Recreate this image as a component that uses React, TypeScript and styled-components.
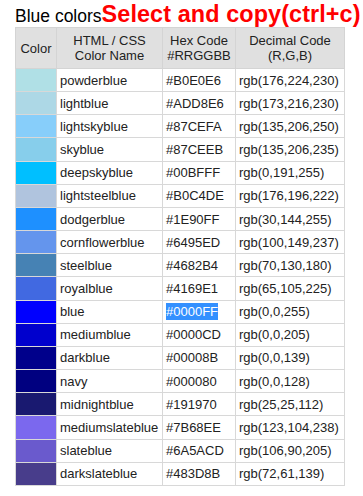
import styled, { createGlobalStyle } from "styled-components";

const GlobalStyle = createGlobalStyle`
  body {
    margin: 0;
    background: #fff;
    font-family: "Liberation Sans", Arial, sans-serif;
  }
`;

const colors: [string, string, string][] = [
  ["powderblue", "#B0E0E6", "rgb(176,224,230)"],
  ["lightblue", "#ADD8E6", "rgb(173,216,230)"],
  ["lightskyblue", "#87CEFA", "rgb(135,206,250)"],
  ["skyblue", "#87CEEB", "rgb(135,206,235)"],
  ["deepskyblue", "#00BFFF", "rgb(0,191,255)"],
  ["lightsteelblue", "#B0C4DE", "rgb(176,196,222)"],
  ["dodgerblue", "#1E90FF", "rgb(30,144,255)"],
  ["cornflowerblue", "#6495ED", "rgb(100,149,237)"],
  ["steelblue", "#4682B4", "rgb(70,130,180)"],
  ["royalblue", "#4169E1", "rgb(65,105,225)"],
  ["blue", "#0000FF", "rgb(0,0,255)"],
  ["mediumblue", "#0000CD", "rgb(0,0,205)"],
  ["darkblue", "#00008B", "rgb(0,0,139)"],
  ["navy", "#000080", "rgb(0,0,128)"],
  ["midnightblue", "#191970", "rgb(25,25,112)"],
  ["mediumslateblue", "#7B68EE", "rgb(123,104,238)"],
  ["slateblue", "#6A5ACD", "rgb(106,90,205)"],
  ["darkslateblue", "#483D8B", "rgb(72,61,139)"],
];

const Page = styled.div`
  padding: 0 0 0 15px;
  width: 363px;
  box-sizing: border-box;
`;

const Heading = styled.div`
  display: flex;
  align-items: baseline;
  height: 27px;
  white-space: nowrap;
  padding-top: 1px;
  box-sizing: border-box;
`;

const SubTitle = styled.span`
  font-size: 17.5px;
  color: #000;
`;

const Hint = styled.span`
  font-size: 23.4px;
  font-weight: bold;
  color: #ff0000;
  letter-spacing: 0.1px;
`;

const Table = styled.table`
  border-collapse: collapse;
  font-size: 13px;
  color: #222;
  table-layout: fixed;
  width: 325px;
`;

const Th = styled.th<{ $w: number }>`
  width: ${(p) => p.$w}px;
  background: #e0e0e0;
  border: 1px solid #d4d4d4;
  font-weight: normal;
  text-align: center;
  height: 40px;
  padding: 0;
  line-height: 15px;
  color: #222;
`;

const Row = styled.tr`
  height: 23.17px;
`;

const Swatch = styled.td<{ $bg: string }>`
  background: ${(p) => p.$bg};
  border: 1px solid #d8d8d8;
  padding: 0;
`;

const Cell = styled.td`
  border: 1px solid #d8d8d8;
  padding: 0 0 0 3px;
  white-space: nowrap;
`;

const Selected = styled.span`
  background: #3390ff;
  color: #fff;
  padding: 1px 0;
`;

export default function App() {
  return (
    <Page>
      <GlobalStyle />
      <Heading>
        <SubTitle>Blue colors</SubTitle>
        <Hint>Select and copy(ctrl+c)</Hint>
      </Heading>
      <Table>
        <thead>
          <tr>
            <Th $w={40}>Color</Th>
            <Th $w={105}>
              HTML / CSS
              <br />
              Color Name
            </Th>
            <Th $w={72}>
              Hex Code
              <br />
              #RRGGBB
            </Th>
            <Th $w={108}>
              Decimal Code
              <br />
              (R,G,B)
            </Th>
          </tr>
        </thead>
        <tbody>
          {colors.map(([name, hex, rgb]) => (
            <Row key={name}>
              <Swatch $bg={hex} />
              <Cell>{name}</Cell>
              <Cell>{name === "blue" ? <Selected>{hex}</Selected> : hex}</Cell>
              <Cell>{rgb}</Cell>
            </Row>
          ))}
        </tbody>
      </Table>
    </Page>
  );
}
